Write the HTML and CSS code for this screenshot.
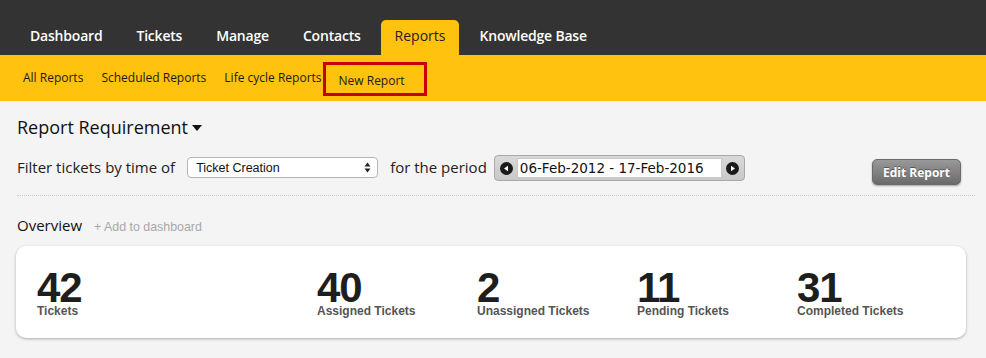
FILE: index.html
```html
<!DOCTYPE html>
<html>
<head>
<meta charset="utf-8">
<link rel="stylesheet" href="styles.css">
</head>
<body>
<div class="topbar">
  <div class="tab">Dashboard</div>
  <div class="tab">Tickets</div>
  <div class="tab">Manage</div>
  <div class="tab">Contacts</div>
  <div class="tab active">Reports</div>
  <div class="tab">Knowledge Base</div>
</div>
<div class="subnav">
  <a class="sublink">All Reports</a>
  <a class="sublink">Scheduled Reports</a>
  <a class="sublink">Life cycle Reports</a>
  <a class="sublink highlight">New Report</a>
</div>
<div class="main">
  <div class="title">Report Requirement <span class="caret"></span></div>
  <div class="filter">
    <span class="label">Filter tickets by time of</span>
    <div class="select">
      <span>Ticket Creation</span>
      <svg class="updown" width="7" height="11" viewBox="0 0 7 11"><path d="M3.5 0.5 L6.5 4.5 H0.5 Z M3.5 10.5 L6.5 6.5 H0.5 Z" fill="#222"/></svg>
    </div>
    <span class="label period">for the period</span>
    <div class="picker">
      <svg class="nav" width="13" height="13" viewBox="0 0 13 13"><circle cx="6.5" cy="6.5" r="6.5" fill="#1a1a1a"/><path d="M4 6.5 L8 3.8 V9.2 Z" fill="#fff"/></svg>
      <div class="dateinput">06-Feb-2012 - 17-Feb-2016</div>
      <svg class="nav" width="13" height="13" viewBox="0 0 13 13"><circle cx="6.5" cy="6.5" r="6.5" fill="#1a1a1a"/><path d="M9 6.5 L5 3.8 V9.2 Z" fill="#fff"/></svg>
    </div>
    <div class="spacer"></div>
    <button class="edit">Edit Report</button>
  </div>
  <div class="divider"></div>
  <div class="overview">
    <span class="ov-title">Overview</span>
    <span class="add">+ Add to dashboard</span>
  </div>
  <div class="card">
    <div class="stat first"><div class="num">42</div><div class="lbl">Tickets</div></div>
    <div class="stat"><div class="num">40</div><div class="lbl">Assigned Tickets</div></div>
    <div class="stat"><div class="num">2</div><div class="lbl">Unassigned Tickets</div></div>
    <div class="stat"><div class="num">11</div><div class="lbl">Pending Tickets</div></div>
    <div class="stat"><div class="num">31</div><div class="lbl">Completed Tickets</div></div>
  </div>
</div>
</body>
</html>
```
FILE: styles.css
```css
* { box-sizing: border-box; }
html, body { margin: 0; padding: 0; }
body {
  width: 986px;
  height: 358px;
  overflow: hidden;
  background: #f4f4f4;
  font-family: "Open Sans", "Liberation Sans", sans-serif;
  color: #111;
}
.topbar {
  height: 55px;
  background: #333333;
  display: flex;
  align-items: flex-end;
  padding-left: 16px;
}
.tab {
  height: 35px;
  padding: 0 14px;
  margin-right: 6px;
  color: #fff;
  font-size: 14px;
  font-weight: 600;
  letter-spacing: -0.2px;
  line-height: 32px;
  border-radius: 5px 5px 0 0;
}
.tab.active {
  background: #ffc20e;
  color: #222;
  font-weight: 400;
  letter-spacing: 0;
}
.subnav {
  height: 46px;
  background: #ffc20e;
  display: flex;
  align-items: center;
  padding-left: 23px;
  gap: 18px;
}
.sublink {
  font-size: 12px;
  color: #1a1a1a;
  line-height: 18px;
}
.sublink.highlight {
  border: 3px solid #c8000c;
  padding: 5px 19px 5px 13px;
  height: 34px;
  margin-left: -17px;
  margin-top: 2px;
  line-height: 22px;
}
.main {
  padding: 0 11px 0 17px;
}
.title {
  margin-top: 13px;
  font-size: 18px;
  line-height: 26px;
  color: #111;
  display: flex;
  align-items: center;
}
.caret {
  display: inline-block;
  width: 0;
  height: 0;
  margin-left: 4px;
  margin-top: 1px;
  border-left: 5px solid transparent;
  border-right: 5px solid transparent;
  border-top: 6px solid #111;
}
.filter {
  margin-top: 15px;
  display: flex;
  align-items: flex-start;
  height: 30px;
}
.label {
  font-size: 15px;
  line-height: 24px;
  color: #222;
}
.select {
  margin-left: 12px;
  margin-top: 2px;
  width: 191px;
  height: 21px;
  background: #fff;
  border: 1px solid #b5b5b5;
  border-radius: 4px;
  display: flex;
  align-items: center;
  justify-content: space-between;
  padding: 0 6px 0 8px;
  font-family: "Liberation Sans", Arial, sans-serif;
  font-size: 12.5px;
  color: #111;
}
.period { margin-left: 12px; }
.picker {
  margin-left: 7px;
  width: 251px;
  height: 26px;
  background: linear-gradient(#d9d9d9, #c9c9c9);
  border: 1px solid #a9a9a9;
  border-radius: 4px;
  display: flex;
  align-items: center;
  padding: 0 5px;
  gap: 4px;
}
.nav { flex: none; }
.dateinput {
  width: 206px;
  height: 20px;
  background: #fff;
  border: 1px solid #c8c8c8;
  font-family: "DejaVu Sans", Verdana, sans-serif;
  font-size: 13.5px;
  line-height: 18px;
  padding-left: 2px;
  color: #111;
  white-space: nowrap;
}
.spacer { flex: 1; }
.edit {
  margin-top: 4px;
  margin-right: 14px;
  width: 89px;
  height: 26px;
  border: 1px solid #6a6a6a;
  border-radius: 5px;
  background: linear-gradient(#999, #6b6b6b);
  box-shadow: 0 1px 2px rgba(0,0,0,0.35);
  color: #fff;
  font-family: "Open Sans", sans-serif;
  font-weight: 700;
  font-size: 12px;
  text-shadow: 0 -1px 0 rgba(0,0,0,0.4);
  padding: 0;
}
.divider {
  margin-top: 10px;
  border-top: 1px dotted #c4c4c4;
  height: 0;
}
.overview {
  margin-top: 18px;
  height: 22px;
  display: flex;
  align-items: baseline;
  gap: 12px;
}
.ov-title { font-size: 15px; color: #111; line-height: 22px; }
.add {
  font-family: "Liberation Sans", Arial, sans-serif;
  font-size: 12.4px;
  color: #a8a8a8;
}
.card {
  margin: 10px 9px 0 -1px;
  height: 92px;
  background: #fff;
  border-radius: 10px;
  box-shadow: 0 1px 3px rgba(0,0,0,0.3);
  display: grid;
  grid-template-columns: 280px 160px 160px 160px 160px;
  padding: 25px 0 0 21px;
}
.num {
  font-family: "Liberation Sans", Arial, sans-serif;
  font-weight: 700;
  font-size: 42px;
  line-height: 34px;
  color: #1e1e1e;
  letter-spacing: -1px;
}
.lbl {
  font-family: "Liberation Sans", Arial, sans-serif;
  font-weight: 700;
  font-size: 12px;
  line-height: 13px;
  color: #555;
}
```
